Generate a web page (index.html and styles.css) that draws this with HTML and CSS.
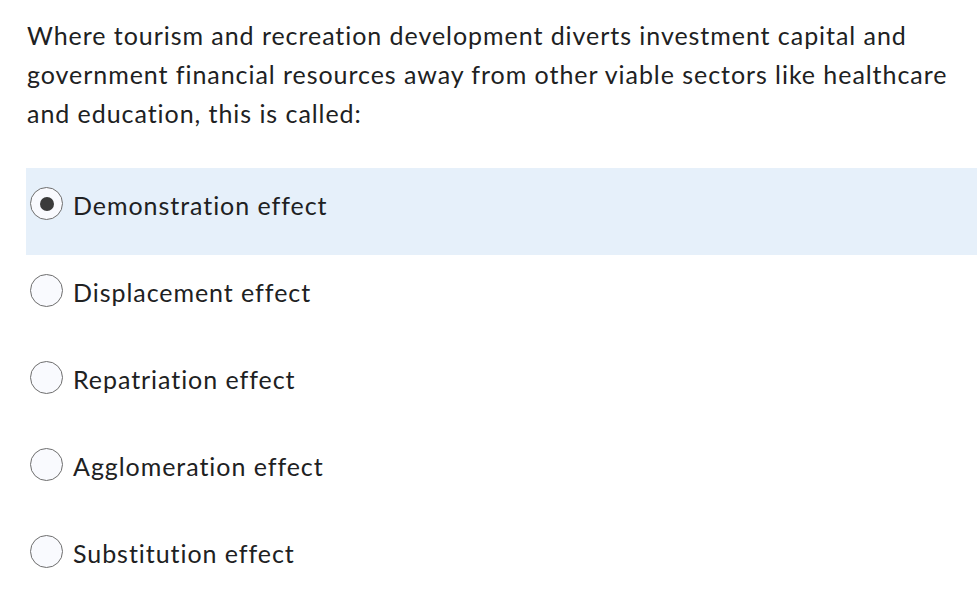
FILE: index.html
```html
<!DOCTYPE html>
<html lang="en">
<head>
<meta charset="utf-8">
<title>Question</title>
<link rel="stylesheet" href="styles.css">
</head>
<body>
<div class="question">
  <p class="prompt">Where tourism and recreation development diverts investment capital and government financial resources away from other viable sectors like healthcare and education, this is called:</p>
  <div class="options">
    <label class="option selected"><input type="radio" name="q" class="radio" checked><span class="label">Demonstration effect</span></label>
    <label class="option"><input type="radio" name="q" class="radio"><span class="label">Displacement effect</span></label>
    <label class="option"><input type="radio" name="q" class="radio"><span class="label">Repatriation effect</span></label>
    <label class="option"><input type="radio" name="q" class="radio"><span class="label">Agglomeration effect</span></label>
    <label class="option"><input type="radio" name="q" class="radio"><span class="label">Substitution effect</span></label>
  </div>
</div>
</body>
</html>
```
FILE: styles.css
```css
html, body {
  margin: 0;
  padding: 0;
  background: #ffffff;
}
body {
  font-family: Lato, "Noto Sans", sans-serif;
  font-size: 25px;
  letter-spacing: 0.95px;
  font-variant-ligatures: none;
  color: #202122;
  overflow: hidden;
}
.question {
  padding: 16px 0 0 26px;
}
.prompt {
  margin: 0 0 35px 1px;
  line-height: 39px;
  max-width: 935px;
}
.options {
  display: flex;
  flex-direction: column;
}
.option {
  display: flex;
  align-items: flex-start;
  height: 87px;
  box-sizing: border-box;
  padding: 18px 0 0 4px;
  line-height: 39px;
  cursor: pointer;
}
.option.selected {
  background: #e6f0fa;
}
.radio {
  appearance: none;
  -webkit-appearance: none;
  margin: 1px 10px 0 0;
  width: 33px;
  height: 33px;
  border-radius: 50%;
  border: 1.5px solid #6e6e6e;
  background: #f9fafe;
  box-sizing: border-box;
  display: flex;
  align-items: center;
  justify-content: center;
  flex: none;
}
.radio:checked::after {
  content: "";
  width: 14px;
  height: 14px;
  border-radius: 50%;
  background: #3b3b3b;
}
.label {
  white-space: nowrap;
}
```
